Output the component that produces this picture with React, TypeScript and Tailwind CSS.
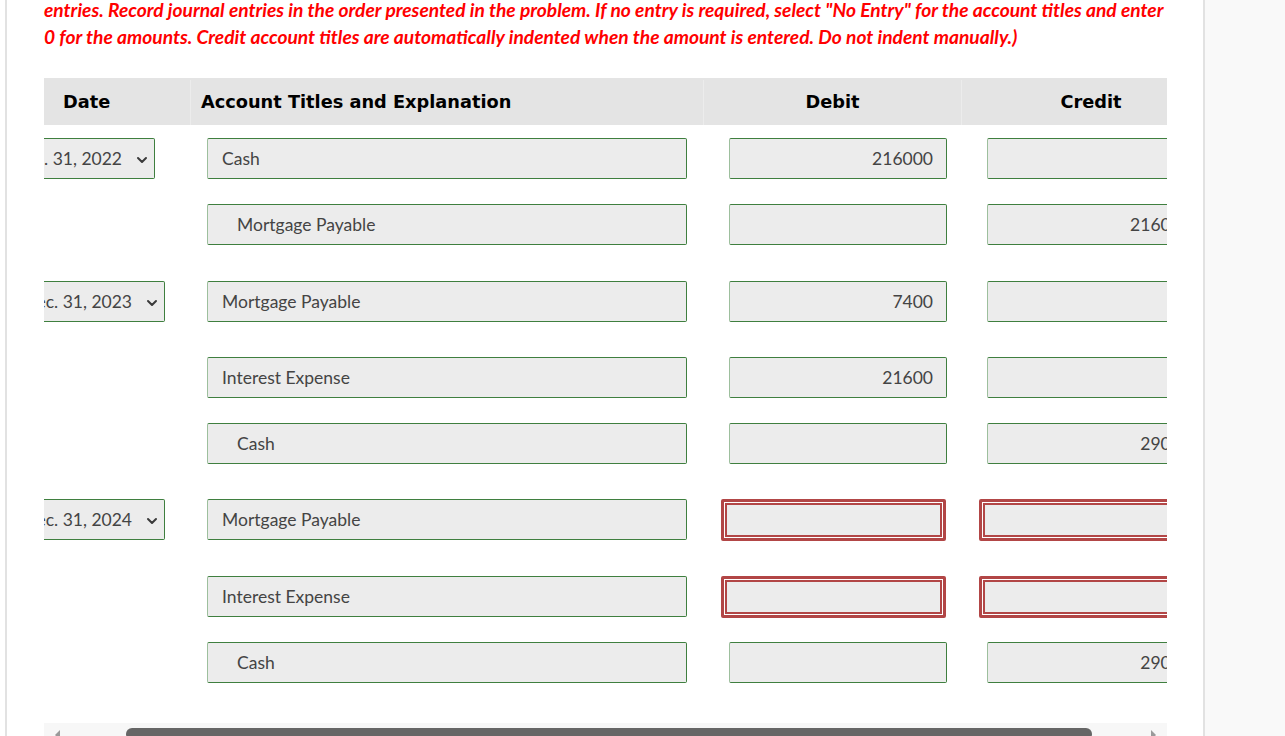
import { ChevronDown } from "lucide-react";

type Row = {
  date?: string;
  account: string;
  indent?: boolean;
  debit?: string;
  credit?: string;
  error?: boolean;
  mt: string;
};

const rows: Row[] = [
  { date: "Dec. 31, 2022", account: "Cash", debit: "216000", mt: "mt-[13px]" },
  { account: "Mortgage Payable", indent: true, credit: "216000", mt: "mt-[25px]" },
  { date: "Dec. 31, 2023", account: "Mortgage Payable", debit: "7400", mt: "mt-[36px]" },
  { account: "Interest Expense", debit: "21600", mt: "mt-[35px]" },
  { account: "Cash", indent: true, credit: "29000", mt: "mt-[25px]" },
  { date: "Dec. 31, 2024", account: "Mortgage Payable", error: true, mt: "mt-[35px]" },
  { account: "Interest Expense", error: true, mt: "mt-[35px]" },
  { account: "Cash", indent: true, credit: "29000", mt: "mt-[24px]" },
];

const greenBox =
  "h-[41px] rounded-[2px] border border-[#3f7f3f] border-l-[#9dbf9d] bg-[#ececec] text-[17.5px] text-[#444] flex items-center pt-[2px]";

const DateSelect = ({ text, first }: { text: string; first: boolean }) => (
  <div className={`flex justify-end overflow-hidden w-[147px] ${first ? "pr-[36px]" : "pr-[26px]"}`}>
    <div className={`${greenBox} shrink-0 w-[160px] justify-end pr-[4px] gap-[12px]`}>
      <span className="whitespace-nowrap">{text}</span>
      <ChevronDown size={16} strokeWidth={3} className="text-[#3a3a3a]" />
    </div>
  </div>
);

const Amount = ({ value, error, credit }: { value?: string; error?: boolean; credit?: boolean }) => {
  if (error) {
    return (
      <div className={`w-[258px] ${credit ? "pl-[17px]" : "pl-[17px] pr-[16px]"}`}>
        <div className="h-[42px] w-[225px] rounded-[2px] border-[3px] border-[#b24646] bg-white p-[1px]">
          <div className="h-full w-full border-2 border-[#b24646] bg-[#ececec]" />
        </div>
      </div>
    );
  }
  return (
    <div className={`w-[258px] ${credit ? "pl-[25px]" : "pl-[25px] pr-[16px]"}`}>
      <div className={`${greenBox} w-[218px] justify-end pr-[13px]`}>{value}</div>
    </div>
  );
};

export default function App() {
  return (
    <div
      className="flex h-[736px] w-[1285px] overflow-hidden bg-white"
      style={{ fontFamily: "Lato, 'Open Sans', sans-serif" }}
    >
      <div className="w-[5px] shrink-0 bg-white" />
      <div className="w-[1200px] shrink-0 border-l-2 border-r-2 border-[#e2e2e2] bg-white pl-[37px] flex flex-col">
        <p className="mt-[-4px] shrink-0 text-[19.2px] leading-[27px] font-bold italic text-[#f00] whitespace-nowrap">
          entries. Record journal entries in the order presented in the problem. If no entry is required, select "No
          Entry" for the account titles and enter
          <br />0 for the amounts. Credit account titles are automatically indented when the amount is entered. Do not
          indent manually.)
        </p>
        <div className="mt-[28px] shrink-0 w-[1123px] overflow-hidden">
          <div className="w-[1176px]">
            <div
              className="flex h-[47px] pt-[2px] bg-[#e4e4e4] text-[17.75px] font-bold text-black"
              style={{ fontFamily: "'DejaVu Sans', Verdana, sans-serif" }}
            >
              <div className="w-[147px] flex items-center pl-[19px] border-r border-[#ececec]">Date</div>
              <div className="w-[513px] flex items-center pl-[10px] border-r border-[#ececec]">
                Account Titles and Explanation
              </div>
              <div className="w-[258px] flex items-center justify-center border-r border-[#ececec]">Debit</div>
              <div className="w-[258px] flex items-center justify-center">Credit</div>
            </div>
            {rows.map((r, i) => (
              <div key={i} className={`flex ${r.mt}`}>
                <div className="w-[147px]">{r.date && <DateSelect text={r.date} first={i === 0} />}</div>
                <div className="w-[513px] pl-[16px] pr-[17px]">
                  <div className={`${greenBox} ${r.indent ? "pl-[29px]" : "pl-[14px]"}`}>{r.account}</div>
                </div>
                <Amount value={r.debit} error={r.error} />
                <Amount value={r.credit} error={r.error} credit />
              </div>
            ))}
          </div>
        </div>
        <div className="mt-[40px] shrink-0 w-[1123px] h-[17px] bg-[#f7f7f7] flex items-center">
          <div className="w-[26px] flex justify-center mt-[6px]">
            <div className="w-0 h-0 border-y-[5px] border-y-transparent border-r-[5px] border-r-[#9a9a9a]" />
          </div>
          <div className="ml-[56px] w-[966px] h-[12px] mt-[4px] rounded-full bg-[#666]" />
          <div className="flex-1 flex justify-end pr-[11px] mt-[6px]">
            <div className="w-0 h-0 border-y-[5px] border-y-transparent border-l-[5px] border-l-[#9a9a9a]" />
          </div>
        </div>
      </div>
      <div className="flex-1 bg-[#f9f9f9]" />
    </div>
  );
}
